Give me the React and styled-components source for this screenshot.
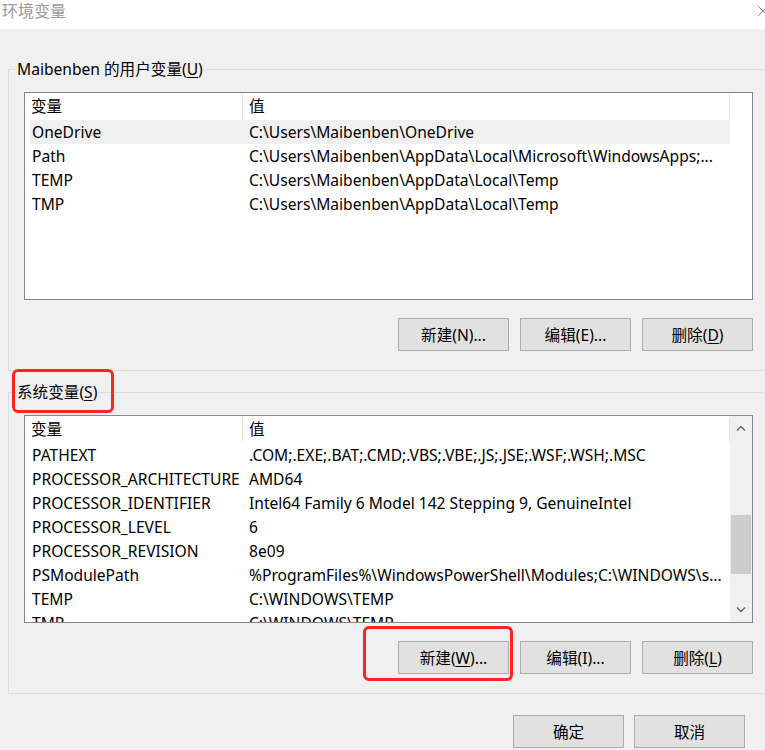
import React from 'react';
import styled, { createGlobalStyle } from 'styled-components';

const GlobalStyle = createGlobalStyle`
  html, body {
    margin: 0;
    padding: 0;
    background: #f0f0f0;
    overflow: hidden;
  }
  body {
    font-family: "Noto Sans", "Noto Sans CJK SC", sans-serif;
    font-size: 15.6px;
    color: #000;
  }
`;

const Window = styled.div`
  position: relative;
  width: 765px;
  height: 750px;
  overflow: hidden;
  background: #f0f0f0;
`;

const TitleBar = styled.div`
  height: 29px;
  background: #fff;
  display: flex;
  align-items: flex-start;
  justify-content: space-between;
  padding: 0 0 0 2px;
`;

const Title = styled.div`
  font-size: 16px;
  line-height: 22px;
  color: #9a9a9a;
`;

const Close = styled.svg`
  margin-top: 5px;
  margin-right: -4px;
`;

const Body = styled.div`
  padding: 0 0 0 8px;
`;

const Group = styled.fieldset`
  margin: ${p => p.$top}px 0 0 0;
  width: 762px;
  box-sizing: border-box;
  border: 1px solid #dcdcdc;
  padding: 0;
  min-width: 0;
`;

const Legend = styled.legend`
  font-size: 15.6px;
  line-height: 20px;
  padding: 0 2px 0 1px;
  margin-left: 7px;
`;

const GroupContent = styled.div`
  padding: 13px 0 19px 15px;
`;

const ListBox = styled.div`
  width: 729px;
  height: 208px;
  box-sizing: border-box;
  border: 1px solid #828790;
  background: #fff;
  display: flex;
  overflow: hidden;
`;

const Columns = styled.div`
  width: 705px;
  flex: none;
  display: flex;
  flex-direction: column;
  overflow: hidden;
`;

const HeaderRow = styled.div`
  display: flex;
  height: 27px;
  flex: none;
`;

const HeaderCell = styled.div`
  width: ${p => p.$w}px;
  box-sizing: border-box;
  height: 25px;
  margin: 1px 0;
  padding-left: 6px;
  border-right: 1px solid #e5e5e5;
  line-height: 25px;
  white-space: nowrap;
`;

const Row = styled.div`
  display: flex;
  height: 24px;
  flex: none;
  background: ${p => (p.$selected ? '#f0f0f0' : 'transparent')};
  margin-left: ${p => (p.$selected ? 5 : 0)}px;
`;

const Cell = styled.div`
  width: ${p => p.$w}px;
  box-sizing: border-box;
  padding-left: ${p => p.$pad}px;
  line-height: 24px;
  white-space: nowrap;
  overflow: hidden;
  flex: none;
`;

const ScrollBar = styled.div`
  width: 22px;
  flex: none;
  background: #f0f0f0;
  display: flex;
  flex-direction: column;
`;

const Arrow = styled.div`
  height: 24px;
  display: flex;
  align-items: center;
  justify-content: center;
  flex: none;
`;

const Track = styled.div`
  flex: 1;
  padding: 0 1px 0 1px;
`;

const Thumb = styled.div`
  height: 59px;
  background: #cdcdcd;
`;

const ButtonRow = styled.div`
  display: flex;
  justify-content: flex-end;
  gap: 11px;
  width: 729px;
  margin-top: ${p => p.$top}px;
`;

const Button = styled.div`
  width: 111px;
  height: 33px;
  box-sizing: border-box;
  background: #e1e1e1;
  border: 1px solid #adadad;
  display: flex;
  align-items: center;
  justify-content: center;
  font-size: 15.6px;
  flex: none;
`;

const Footer = styled.div`
  display: flex;
  justify-content: flex-end;
  gap: 10px;
  padding-right: 20px;
  margin-top: 21px;
`;

const Mark = styled.div`
  position: absolute;
  border: 3px solid #ff2424;
  border-radius: 6px;
  box-sizing: border-box;
  pointer-events: none;
`;

const Key = styled.span`
  text-decoration: underline;
  text-underline-offset: 2px;
`;

const userVars = [
  ['OneDrive', 'C:\\Users\\Maibenben\\OneDrive'],
  ['Path', 'C:\\Users\\Maibenben\\AppData\\Local\\Microsoft\\WindowsApps;...'],
  ['TEMP', 'C:\\Users\\Maibenben\\AppData\\Local\\Temp'],
  ['TMP', 'C:\\Users\\Maibenben\\AppData\\Local\\Temp'],
];

const systemVars = [
  ['PATHEXT', '.COM;.EXE;.BAT;.CMD;.VBS;.VBE;.JS;.JSE;.WSF;.WSH;.MSC'],
  ['PROCESSOR_ARCHITECTURE', 'AMD64'],
  ['PROCESSOR_IDENTIFIER', 'Intel64 Family 6 Model 142 Stepping 9, GenuineIntel'],
  ['PROCESSOR_LEVEL', '6'],
  ['PROCESSOR_REVISION', '8e09'],
  ['PSModulePath', '%ProgramFiles%\\WindowsPowerShell\\Modules;C:\\WINDOWS\\s...'],
  ['TEMP', 'C:\\WINDOWS\\TEMP'],
  ['TMP', 'C:\\WINDOWS\\TEMP'],
];

const Chevron = ({ up }) => (
  <svg width="10" height="6" viewBox="0 0 10 6">
    <path
      d={up ? 'M1 5.5 L5 1.5 L9 5.5' : 'M1 0.5 L5 4.5 L9 0.5'}
      fill="none"
      stroke="#606060"
      strokeWidth="1.4"
    />
  </svg>
);

const VarList = ({ rows, selected, scroll }) => (
  <ListBox>
    <Columns>
      <HeaderRow>
        <HeaderCell $w={218}>变量</HeaderCell>
        <HeaderCell $w={487}>值</HeaderCell>
      </HeaderRow>
      {rows.map(([name, value], i) => (
        <Row key={name + i} $selected={i === selected}>
          <Cell $w={i === selected ? 213 : 218} $pad={i === selected ? 2 : 7}>{name}</Cell>
          <Cell $w={482} $pad={6}>{value}</Cell>
        </Row>
      ))}
    </Columns>
    {scroll != null && (
      <ScrollBar>
        <Arrow><Chevron up /></Arrow>
        <Track>
          <Thumb style={{ marginTop: scroll }} />
        </Track>
        <Arrow><Chevron /></Arrow>
      </ScrollBar>
    )}
  </ListBox>
);

export default function App() {
  return (
    <Window>
      <GlobalStyle />
      <TitleBar>
        <Title>环境变量</Title>
        <Close width="12" height="12" viewBox="0 0 12 12">
          <path d="M1 1 L11 11 M11 1 L1 11" stroke="#8a8a8a" strokeWidth="1" fill="none" />
        </Close>
      </TitleBar>
      <Body>
        <Group $top={30}>
          <Legend>Maibenben 的用户变量(<Key>U</Key>)</Legend>
          <GroupContent>
            <VarList rows={userVars} selected={0} />
            <ButtonRow $top={18}>
              <Button>新建(N)...</Button>
              <Button>编辑(E)...</Button>
              <Button>删除(<Key>D</Key>)</Button>
            </ButtonRow>
          </GroupContent>
        </Group>
        <Group $top={11}>
          <Legend>系统变量(<Key>S</Key>)</Legend>
          <GroupContent>
            <VarList rows={systemVars} scroll={75} />
            <ButtonRow $top={18}>
              <Button>新建(<Key>W</Key>)...</Button>
              <Button>编辑(I)...</Button>
              <Button>删除(<Key>L</Key>)</Button>
            </ButtonRow>
          </GroupContent>
        </Group>
        <Footer>
          <Button>确定</Button>
          <Button>取消</Button>
        </Footer>
      </Body>
      <Mark style={{ left: 12, top: 369, width: 102, height: 44 }} />
      <Mark style={{ left: 363, top: 626, width: 150, height: 55 }} />
    </Window>
  );
}
